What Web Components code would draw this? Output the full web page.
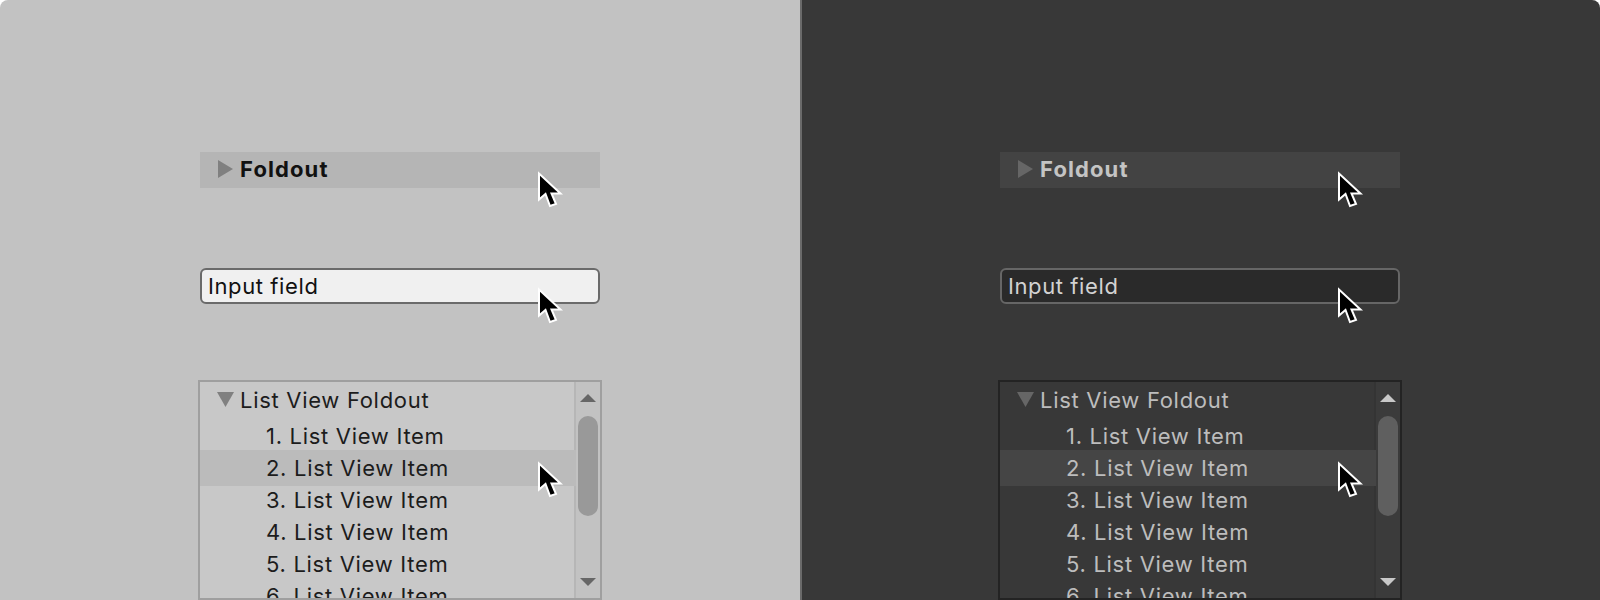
<!DOCTYPE html>
<html>
<head>
<meta charset="utf-8">
<style>
	html, body { margin: 0; background: #fff; }
	body { width: 1600px; height: 600px; overflow: hidden; font-family: Inter, "Liberation Sans", sans-serif; }
	.sheet { display: grid; grid-template-columns: 800px 800px; height: 600px; }
</style>
</head>
<body>
<div class="sheet">
	<theme-panel theme="light">
		<fold-out><mouse-cursor></mouse-cursor></fold-out>
		<input-box>Input field<mouse-cursor slot="cursor"></mouse-cursor></input-box>
		<list-view>
			<list-item>1. List View Item</list-item>
			<list-item hover>2. List View Item<mouse-cursor slot="cursor"></mouse-cursor></list-item>
			<list-item>3. List View Item</list-item>
			<list-item>4. List View Item</list-item>
			<list-item>5. List View Item</list-item>
			<list-item>6. List View Item</list-item>
		</list-view>
	</theme-panel>
	<theme-panel theme="dark">
		<fold-out><mouse-cursor></mouse-cursor></fold-out>
		<input-box>Input field<mouse-cursor slot="cursor"></mouse-cursor></input-box>
		<list-view>
			<list-item>1. List View Item</list-item>
			<list-item hover>2. List View Item<mouse-cursor slot="cursor"></mouse-cursor></list-item>
			<list-item>3. List View Item</list-item>
			<list-item>4. List View Item</list-item>
			<list-item>5. List View Item</list-item>
			<list-item>6. List View Item</list-item>
		</list-view>
	</theme-panel>
</div>

<script>
class ThemePanel extends HTMLElement {
	constructor() {
		super();
		this.attachShadow({mode: 'open'});
		this.shadowRoot.innerHTML = `
			<style>
				:host {
					display: flex;
					flex-direction: column;
					box-sizing: border-box;
					height: 600px;
					padding: 152px 200px 0;
					overflow: hidden;
					font-size: 22px;
					letter-spacing: 0.7px;
					background: var(--bg);
					color: var(--text);
				}
				:host([theme="light"]) {
					--bg: #c2c2c2;
					--text: #111;
					--text-soft: #1c1c1c;
					--bar: #b5b5b5;
					--tri: #808080;
					--input-bg: #f0f0f0;
					--input-line: #6a6a6a;
					--input-text: #111;
					--list-bg: #c8c8c8;
					--list-line: #9f9f9f;
					--hover: #bbb;
					--track: #c2c2c2;
					--track-line: #b6b6b6;
					--thumb: #999;
					--arrow: #666;
					border-top-left-radius: 8px;
				}
				:host([theme="dark"]) {
					--bg: #383838;
					--text: #c4c4c4;
					--text-soft: #bdbdbd;
					--bar: #434343;
					--tri: #666;
					--input-bg: #2a2a2a;
					--input-line: #666;
					--input-text: #d2d2d2;
					--list-bg: #383838;
					--list-line: #232323;
					--hover: #454545;
					--track: #3b3b3b;
					--track-line: #343434;
					--thumb: #5f5f5f;
					--arrow: #c8c8c8;
					border-top-right-radius: 8px;
					box-shadow: inset 2px 0 0 #6a6a6a;
				}
			</style>
			<slot></slot>
		`;
	}
}

class FoldOut extends HTMLElement {
	constructor() {
		super();
		this.attachShadow({mode: 'open'});
		this.shadowRoot.innerHTML = `
			<style>
				:host {
					display: flex;
					position: relative;
					flex: none;
					align-items: center;
					gap: 7px;
					height: 36px;
					padding-left: 18px;
					background: var(--bar);
					font-weight: 700;
				}
				svg { display: block; flex: none; margin-top: -2px; }
				span { letter-spacing: 1.1px; margin-top: -2px; }
			</style>
			<svg width="15" height="18" viewBox="0 0 15 18"><path d="M0 0 L15 9 L0 18 Z" fill="var(--tri)"/></svg>
			<span>Foldout</span>
			<slot></slot>
		`;
	}
}

class InputBox extends HTMLElement {
	constructor() {
		super();
		this.attachShadow({mode: 'open'});
		this.shadowRoot.innerHTML = `
			<style>
				:host {
					display: flex;
					position: relative;
					flex: none;
					align-items: center;
					box-sizing: border-box;
					height: 36px;
					margin-top: 80px;
					padding-left: 6px;
					border: 2px solid var(--input-line);
					border-radius: 6px;
					background: var(--input-bg);
					color: var(--input-text);
					letter-spacing: 0.6px;
				}
				slot[name="cursor"]::slotted(*) { top: 18px; left: 336px; }
			</style>
			<slot></slot>
			<slot name="cursor"></slot>
		`;
	}
}

class ListView extends HTMLElement {
	constructor() {
		super();
		this.attachShadow({mode: 'open'});
		this.shadowRoot.innerHTML = `
			<style>
				:host {
					display: grid;
					grid-template-columns: 1fr 26px;
					flex: none;
					box-sizing: border-box;
					height: 220px;
					margin: 76px -2px 0;
					border: 2px solid var(--list-line);
					background: var(--list-bg);
					overflow: hidden;
				}
				.rows {
					display: flex;
					flex-direction: column;
					min-width: 0;
				}
				.head {
					display: flex;
					flex: none;
					align-items: center;
					gap: 6px;
					height: 36px;
					padding-left: 17px;
					margin-bottom: 2px;
					color: var(--text-soft);
				}
				.head svg { display: block; flex: none; margin-top: -1px; }
				.bar {
					display: flex;
					flex-direction: column;
					align-items: center;
					box-sizing: border-box;
					border-left: 2px solid var(--track-line);
					background: var(--track);
				}
				.bar svg { display: block; flex: none; }
				.up { margin-top: 12px; }
				.thumb {
					flex: none;
					width: 20px;
					height: 100px;
					margin-top: 14px;
					border-radius: 10px;
					background: var(--thumb);
				}
				.down { margin-top: 62px; }
			</style>
			<div class="rows">
				<div class="head">
					<svg width="17" height="15" viewBox="0 0 17 15"><path d="M0 0 L17 0 L8.5 15 Z" fill="var(--tri)"/></svg>
					<span>List View Foldout</span>
				</div>
				<slot></slot>
			</div>
			<div class="bar">
				<svg class="up" width="16" height="8" viewBox="0 0 16 8"><path d="M8 0 L16 8 L0 8 Z" fill="var(--arrow)"/></svg>
				<div class="thumb"></div>
				<svg class="down" width="16" height="8" viewBox="0 0 16 8"><path d="M0 0 L16 0 L8 8 Z" fill="var(--arrow)"/></svg>
			</div>
		`;
	}
}

class ListItem extends HTMLElement {
	constructor() {
		super();
		this.attachShadow({mode: 'open'});
		this.shadowRoot.innerHTML = `
			<style>
				:host {
					display: flex;
					position: relative;
					flex: none;
					align-items: center;
					height: 32px;
					padding-left: 66px;
					color: var(--text-soft);
					white-space: nowrap;
				}
				:host([hover]) {
					margin-right: -2px;
					background: var(--hover);
					box-shadow: 0 -2px 0 var(--hover), 0 2px 0 var(--hover);
				}
				slot[name="cursor"]::slotted(*) { top: 10px; left: 338px; }
			</style>
			<slot></slot>
			<slot name="cursor"></slot>
		`;
	}
}

class MouseCursor extends HTMLElement {
	constructor() {
		super();
		this.attachShadow({mode: 'open'});
		this.shadowRoot.innerHTML = `
			<style>
				:host {
					display: block;
					position: absolute;
					top: 20px;
					left: 338px;
					width: 24px;
					height: 36px;
				}
				svg { display: block; overflow: visible; }
			</style>
			<svg width="24" height="36" viewBox="0 0 24 36">
				<path d="M1 1.5 L1 27.5 L7.5 22 L12 34 L18 32 L13.5 21.5 L22.5 21.5 Z"
					fill="#000" stroke="#fff" stroke-width="2" stroke-linejoin="miter" stroke-miterlimit="3"/>
			</svg>
		`;
	}
}

customElements.define('theme-panel', ThemePanel);
customElements.define('fold-out', FoldOut);
customElements.define('input-box', InputBox);
customElements.define('list-view', ListView);
customElements.define('list-item', ListItem);
customElements.define('mouse-cursor', MouseCursor);
</script>
</body>
</html>
